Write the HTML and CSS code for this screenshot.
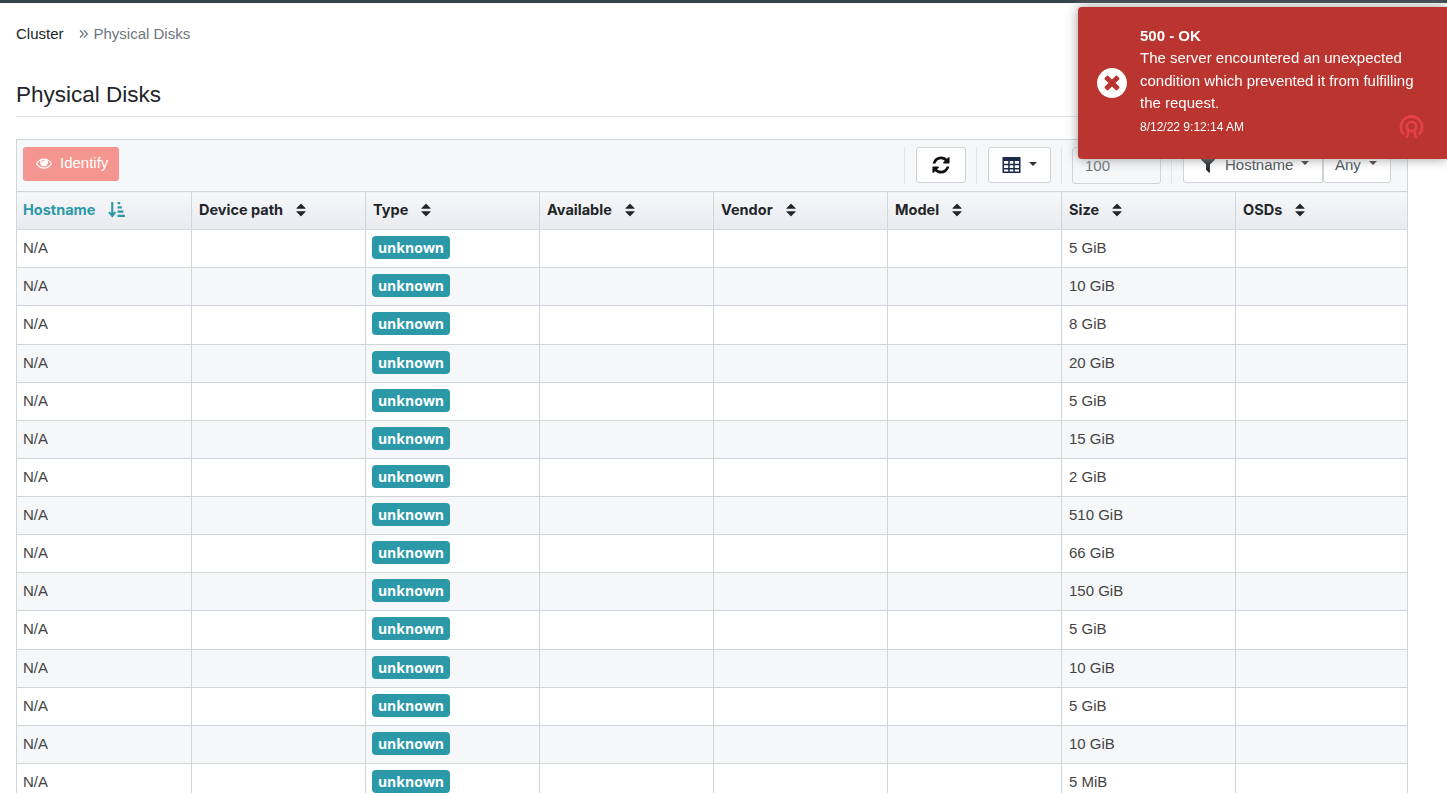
FILE: index.html
```html
<!DOCTYPE html>
<html lang="en">
<head>
<meta charset="utf-8">
<title>Physical Disks</title>
<link rel="stylesheet" href="styles.css">
</head>
<body>
<svg class="defs" width="0" height="0" aria-hidden="true">
  <symbol id="i-sort" viewBox="0 0 1792 1792"><path d="M1408 1088q0 26-19 45l-448 448q-19 19-45 19t-45-19l-448-448q-19-19-19-45t19-45 45-19h896q26 0 45 19t19 45zm0-384q0 26-19 45t-45 19h-896q-26 0-45-19t-19-45 19-45l448-448q19-19 45-19t45 19l448 448q19 19 19 45z"/></symbol>
</svg>
<div class="topbar"></div>
<main class="page">
  <nav class="crumbs"><span class="crumb">Cluster</span><svg class="crumb-sep" viewBox="0 0 10 10" fill="none" stroke="currentColor" stroke-width="1.200"><path d="M1 1.500 4.500 5 1 8.500M5 1.500 8.500 5 5 8.500"/></svg><span class="crumb-cur">Physical Disks</span></nav>
  <h1 class="title">Physical Disks</h1>
  <section class="panel">
    <div class="toolbar">
      <button class="btn-identify"><svg class="ic-eye" viewBox="0 0 1792 1792"><path d="M1664 960q-152-236-381-353 61 104 61 225 0 185-131.5 316.5t-316.5 131.5-316.5-131.5-131.5-316.5q0-121 61-225-229 117-381 353 133 205 333.5 326.5t434.5 121.5 434.5-121.5 333.5-326.5zm-720-384q0-20-14-34t-34-14q-125 0-214.5 89.5t-89.5 214.5q0 20 14 34t34 14 34-14 14-34q0-86 61-147t147-61q20 0 34-14t14-34zm848 384q0 34-20 69-140 230-376.5 368.5t-499.5 138.5-499.5-139-376.5-368q-20-35-20-69t20-69q140-229 376.5-368t499.5-139 499.5 139 376.5 368q20 35 20 69z"/></svg>Identify</button>
      <div class="tools">
        <span class="sep"></span>
        <button class="tool tool-refresh"><svg class="ic-refresh" viewBox="0 0 1792 1792"><path d="M1639 1056q0 5-1 7-64 268-268 434.5t-478 166.5q-146 0-282.5-55t-243.5-157l-129 129q-19 19-45 19t-45-19-19-45v-448q0-26 19-45t45-19h448q26 0 45 19t19 45-19 45l-137 137q71 66 161 102t187 36q134 0 250-65t186-179q11-17 53-117 8-23 30-23h192q13 0 22.5 9.5t9.5 22.5zm25-800v448q0 26-19 45t-45 19h-448q-26 0-45-19t-19-45 19-45l138-138q-148-137-349-137-134 0-250 65t-186 179q-11 17-53 117-8 23-30 23h-199q-13 0-22.5-9.5t-9.5-22.5v-7q65-268 270-434.5t480-166.5q146 0 284 55.5t245 156.5l130-129q19-19 45-19t45 19 19 45z"/></svg></button>
        <span class="sep"></span>
        <button class="tool tool-cols"><svg class="ic-table" viewBox="0 0 18 16"><path d="M0 0h18v16H0zM1.500 4v2.800h4.200V4zm5.700 0v2.800h3.600V4zm5.100 0v2.800h4.200V4zM1.500 8.200V11h4.200V8.200zm5.700 0V11h3.600V8.200zm5.100 0V11h4.200V8.200zM1.500 12.400v2.100h4.200v-2.100zm5.700 0v2.100h3.600v-2.100zm5.100 0v2.100h4.200v-2.100z" fill-rule="evenodd"/></svg><i class="caret"></i></button>
        <span class="sep"></span>
        <input class="limit" value="100" aria-label="Rows">
        <span class="sep"></span>
        <button class="tool tool-filter"><svg class="ic-filter" viewBox="0 0 1792 1792"><path d="M1595 295q17 41-14 70l-493 493v742q0 42-39 59-13 5-25 5-27 0-45-19l-256-256q-19-19-19-45v-486l-493-493q-31-29-14-70 17-39 59-39h1280q42 0 59 39z"/></svg>Hostname<i class="caret"></i></button>
        <button class="tool tool-any">Any<i class="caret"></i></button>
      </div>
    </div>
    <table class="grid">
      <colgroup><col class="col-first"><col class="col-mid"><col class="col-mid"><col class="col-mid"><col class="col-mid"><col class="col-mid"><col class="col-mid"><col class="col-last"></colgroup>
      <thead>
        <tr>
          <th class="active"><span class="th-label th-label-active">Hostname</span><svg class="ic-amount" viewBox="0 0 16 16"><path d="M4 1v12M1 10.500 4 14l3-3.500M9 2h2.500M9 6h4M9 10h5.500M9 14h7" fill="none" stroke="currentColor" stroke-width="2"/></svg></th>
          <th><span class="th-label">Device path</span><svg class="ic-sort"><use href="#i-sort"/></svg></th>
          <th><span class="th-label">Type</span><svg class="ic-sort"><use href="#i-sort"/></svg></th>
          <th><span class="th-label">Available</span><svg class="ic-sort"><use href="#i-sort"/></svg></th>
          <th><span class="th-label">Vendor</span><svg class="ic-sort"><use href="#i-sort"/></svg></th>
          <th><span class="th-label">Model</span><svg class="ic-sort"><use href="#i-sort"/></svg></th>
          <th><span class="th-label">Size</span><svg class="ic-sort"><use href="#i-sort"/></svg></th>
          <th><span class="th-label">OSDs</span><svg class="ic-sort"><use href="#i-sort"/></svg></th>
        </tr>
      </thead>
      <tbody>
        <tr><td>N/A</td><td></td><td><span class="badge">unknown</span></td><td></td><td></td><td></td><td>5 GiB</td><td></td></tr>
        <tr><td>N/A</td><td></td><td><span class="badge">unknown</span></td><td></td><td></td><td></td><td>10 GiB</td><td></td></tr>
        <tr><td>N/A</td><td></td><td><span class="badge">unknown</span></td><td></td><td></td><td></td><td>8 GiB</td><td></td></tr>
        <tr><td>N/A</td><td></td><td><span class="badge">unknown</span></td><td></td><td></td><td></td><td>20 GiB</td><td></td></tr>
        <tr><td>N/A</td><td></td><td><span class="badge">unknown</span></td><td></td><td></td><td></td><td>5 GiB</td><td></td></tr>
        <tr><td>N/A</td><td></td><td><span class="badge">unknown</span></td><td></td><td></td><td></td><td>15 GiB</td><td></td></tr>
        <tr><td>N/A</td><td></td><td><span class="badge">unknown</span></td><td></td><td></td><td></td><td>2 GiB</td><td></td></tr>
        <tr><td>N/A</td><td></td><td><span class="badge">unknown</span></td><td></td><td></td><td></td><td>510 GiB</td><td></td></tr>
        <tr><td>N/A</td><td></td><td><span class="badge">unknown</span></td><td></td><td></td><td></td><td>66 GiB</td><td></td></tr>
        <tr><td>N/A</td><td></td><td><span class="badge">unknown</span></td><td></td><td></td><td></td><td>150 GiB</td><td></td></tr>
        <tr><td>N/A</td><td></td><td><span class="badge">unknown</span></td><td></td><td></td><td></td><td>5 GiB</td><td></td></tr>
        <tr><td>N/A</td><td></td><td><span class="badge">unknown</span></td><td></td><td></td><td></td><td>10 GiB</td><td></td></tr>
        <tr><td>N/A</td><td></td><td><span class="badge">unknown</span></td><td></td><td></td><td></td><td>5 GiB</td><td></td></tr>
        <tr><td>N/A</td><td></td><td><span class="badge">unknown</span></td><td></td><td></td><td></td><td>10 GiB</td><td></td></tr>
        <tr><td>N/A</td><td></td><td><span class="badge">unknown</span></td><td></td><td></td><td></td><td>5 MiB</td><td></td></tr>
      </tbody>
    </table>
  </section>
</main>
<aside class="toast">
  <svg class="toast-icon" viewBox="128 128 1536 1536"><path d="M1277 1122q0-26-19-45l-181-181 181-181q19-19 19-45 0-27-19-46l-90-90q-19-19-46-19-26 0-45 19l-181 181-181-181q-19-19-45-19-27 0-46 19l-90 90q-19 19-19 46 0 26 19 45l181 181-181 181q-19 19-19 45 0 27 19 46l90 90q19 19 46 19 26 0 45-19l181-181 181 181q19 19 45 19 27 0 46-19l90-90q19-19 19-46zm387-226q0 209-103 385.500t-279.500 279.500-385.500 103-385.500-103-279.500-279.500-103-385.500 103-385.500 279.500-279.500 385.500-103 385.500 103 279.500 279.500 103 385.500z"/></svg>
  <div class="toast-body">
    <div class="toast-title">500 - OK</div>
    <div class="toast-msg">The server encountered an unexpected condition which prevented it from fulfilling the request.</div>
    <div class="toast-date">8/12/22 9:12:14 AM</div>
  </div>
  <svg class="toast-logo" viewBox="0 0 26 26" fill="none" stroke="currentColor" stroke-width="2.700"><path d="M5.500 21.500a11 11 0 1 1 15 0"/><circle cx="13" cy="13" r="4.800"/><path d="M9.700 16.500C9.900 19.500 9.200 22 8 25M16.300 16.500C16.100 19.500 16.800 22 18 25"/></svg>
</aside>
</body>
</html>
```

FILE: styles.css
```css
* { box-sizing: border-box; }
html, body { height: 100%; }
body {
  margin: 0;
  overflow: hidden;
  background: #fff;
  color: #333;
  font-family: "Liberation Sans", Arial, sans-serif;
  font-size: 15px;
}
.defs { position: absolute; }
.topbar { height: 3px; background: #374249; }
.page { padding: 0 39px 0 16px; }
.crumbs {
  display: flex;
  align-items: center;
  height: 61px;
  font-size: 15px;
}
.crumb { color: #212529; }
.crumb-sep { width: 10px; height: 10px; margin: 1px 5px 0 15px; color: #6c757d; }
.crumb-cur { color: #6c757d; }
.title {
  margin: 0 0 22px;
  height: 53px;
  padding-top: 17px;
  border-bottom: 1px solid #dfe2e6;
  font-size: 22.500px;
  line-height: 28px;
  font-weight: 400;
  color: #212529;
}
.panel { width: 1392px; }
.toolbar {
  display: flex;
  justify-content: space-between;
  height: 52px;
  padding: 7px 16px 0 6px;
  background: #f6f7f9;
  border: 1px solid #d0d4db;
  border-bottom: 0;
}
button { font-family: inherit; }
.btn-identify {
  display: flex;
  align-items: center;
  width: 96px;
  height: 34px;
  padding: 0 0 4px 13px;
  border: 0;
  border-radius: 3px;
  background: #f4958f;
  color: #fff;
  font-size: 15px;
}
.ic-eye { width: 16px; height: 16px; margin: 2px 8px 0 0; fill: #fff; }
.tools { display: flex; align-items: flex-start; }
.sep { width: 1px; height: 37px; background: #e3e5e9; margin: 0 10px; }
.tool {
  display: flex;
  align-items: center;
  justify-content: center;
  height: 36px;
  background: #fff;
  border: 1px solid #ced2d9;
  border-radius: 3px;
  color: #495057;
  font-size: 15px;
}
.tool-refresh { width: 50px; margin-left: 1px; }
.tool-cols { width: 63px; margin-left: 1px; }
.tool-filter { justify-content: flex-start; width: 140px; margin-left: 1px; padding: 0 0 2px 15px; border-radius: 3px 0 0 3px; }
.tool-any { justify-content: flex-start; width: 68px; padding: 0 0 2px 11px; border-radius: 3px; }
.ic-refresh { width: 20px; height: 20px; fill: #111; }
.ic-table { width: 19px; height: 16px; fill: #1a2a4a; }
.ic-filter { width: 18px; height: 18px; margin: 2px 8px 0 0; fill: #212529; }
.caret {
  width: 0;
  height: 0;
  margin: -3px 0 0 8px;
  border-left: 4.500px solid transparent;
  border-right: 4.500px solid transparent;
  border-top: 4px solid #333;
}
.limit {
  width: 89px;
  height: 37px;
  padding: 0 12px;
  background: #f6f7f9;
  border: 1px solid #ced2d9;
  border-radius: 3px;
  color: #6c757d;
  font: 15px "Liberation Sans", Arial, sans-serif;
}
.grid {
  width: 1391px;
  table-layout: fixed;
  border-collapse: collapse;
}
.col-first { width: 175px; }
.col-mid { width: 174px; }
.col-last { width: 172px; }
.grid th, .grid td {
  border: 1px solid #d0d4db;
  padding: 0 7px 2px;
  text-align: left;
  white-space: nowrap;
}
.grid th:first-child, .grid td:first-child { padding-left: 6px; }
.grid th {
  height: 38.125px;
  padding-bottom: 3px;
  background: linear-gradient(#f6f7f9, #e9ebef);
  color: #212529;
  font-family: Inter, sans-serif;
  font-size: 14.500px;
  font-weight: 700;
}
.grid th.active { color: #2b99a8; }
.th-label { margin-right: 10px; vertical-align: middle; }
.th-label-active { margin-right: 13px; }
.ic-sort { width: 16px; height: 16px; fill: #212529; vertical-align: middle; }
.ic-amount { width: 17px; height: 17px; color: #2b99a8; vertical-align: middle; }
.grid td { height: 38.125px; color: #444; font-size: 15px; }
.grid tbody tr:nth-child(even) td { background: #f6f7f9; }
.badge {
  display: inline-block;
  width: 78px;
  height: 23px;
  margin-left: -1px;
  border-radius: 4px;
  background: #2b99a8;
  color: #fff;
  font-family: "Open Sans", sans-serif;
  font-size: 14px;
  font-weight: 700;
  line-height: 23px;
  text-align: center;
  vertical-align: middle;
}
.toast {
  position: fixed;
  top: 7px;
  right: 0;
  display: flex;
  width: 369px;
  height: 152px;
  padding: 18px 15px 0 19px;
  background: #bb3530;
  border-radius: 4px 0 0 4px;
  box-shadow: 0 0 12px #999;
  color: #fff;
}
.toast-icon { flex: none; width: 30px; height: 30px; margin: 43px 13px 0 0; fill: #fff; }
.toast-body { width: 285px; }
.toast-title { font-size: 15px; font-weight: 700; line-height: 22px; }
.toast-msg { font-size: 15px; line-height: 22.500px; }
.toast-date { margin-top: 5px; font-size: 12px; line-height: 14px; }
.toast-logo { position: absolute; right: 23px; bottom: 20px; width: 25px; height: 25px; color: #e8404a; }
```
